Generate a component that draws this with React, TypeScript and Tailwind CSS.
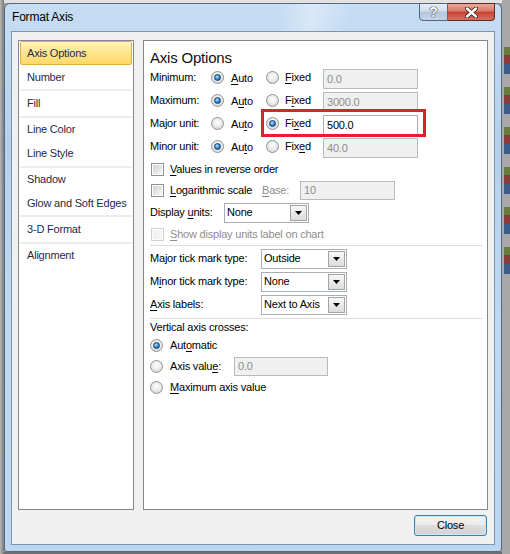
import React from "react";

function Acc({ t, i }: { t: string; i?: number }) {
  if (i === undefined || i < 0) return <>{t}</>;
  return (
    <>
      {t.slice(0, i)}
      <span className="underline decoration-1 underline-offset-[2px]">{t[i]}</span>
      {t.slice(i + 1)}
    </>
  );
}

function Radio({ on }: { on?: boolean }) {
  return (
    <span className="flex h-[13px] w-[13px] shrink-0 items-center justify-center rounded-full border border-[#8f9194] bg-[radial-gradient(circle_at_50%_40%,#ffffff_0%,#ececec_45%,#cdcdcd_100%)]">
      {on && (
        <span className="h-[7px] w-[7px] rounded-full border border-[#0f3f78] bg-[radial-gradient(circle_at_40%_35%,#c4f0ff_0%,#3d92da_45%,#0d4890_100%)]" />
      )}
    </span>
  );
}

function Check({ disabled }: { disabled?: boolean }) {
  return (
    <span
      className={
        disabled
          ? "flex h-[13px] w-[13px] shrink-0 items-center justify-center border border-[#cfd1d4] bg-white"
          : "flex h-[13px] w-[13px] shrink-0 items-center justify-center border border-[#8f9194] bg-white"
      }
    >
      <span
        className={
          disabled
            ? "h-[9px] w-[9px] bg-[#f3f3f3]"
            : "h-[9px] w-[9px] bg-[linear-gradient(135deg,#d2d2d2,#f6f6f6)]"
        }
      />
    </span>
  );
}

function SelectBox({ cls, value }: { cls: string; value: string }) {
  return (
    <div className={cls}>
      <span className="flex-1 overflow-hidden whitespace-nowrap">{value}</span>
      <span className="flex h-[16px] w-[17px] shrink-0 items-center justify-center border border-[#a3a3a3] bg-[linear-gradient(#f7f7f7,#dcdcdc)]">
        <svg width="7" height="4" viewBox="0 0 7 4">
          <path d="M0 0h7L3.5 4z" fill="#000" />
        </svg>
      </span>
    </div>
  );
}

function AxisRow({
  label,
  autoOn,
  autoU,
  fixedU,
  value,
  highlight,
}: {
  label: string;
  autoOn: boolean;
  autoU: number;
  fixedU: number;
  value: string;
  highlight?: boolean;
}) {
  const input = highlight ? (
    <div className="mt-[3px] flex h-[20px] w-[95px] items-center border border-[#abadb3] bg-white pl-[3px] text-black">
      {value}
    </div>
  ) : (
    <div className="mt-[3px] flex h-[20px] w-[95px] items-center border border-[#b7babe] bg-[#f0f0f0] pl-[3px] text-[#8d8d8d]">
      {value}
    </div>
  );
  return (
    <div className="flex h-[23px] items-center">
      <span className="w-[61px] shrink-0">{label}</span>
      <div className="flex w-[55px] shrink-0 items-center gap-[7px]">
        <Radio on={autoOn} />
        <span className="mt-[2px]">
          <Acc t="Auto" i={autoU} />
        </span>
      </div>
      <div className="relative flex h-full items-center">
        <div className="flex w-[57px] shrink-0 items-center gap-[6px]">
          <Radio on={!autoOn} />
          <span>
            <Acc t="Fixed" i={fixedU} />
          </span>
        </div>
        {input}
        {highlight && (
          <div className="pointer-events-none absolute -left-[5px] -top-[3px] h-[28px] w-[165px] border-[3px] border-[#e3202a]" />
        )}
      </div>
    </div>
  );
}

function LeftList() {
  const item = "flex items-center pl-[7px] whitespace-nowrap";
  const sep = "h-[2px] bg-[#ebebf0]";
  return (
    <div className="flex w-[116px] shrink-0 flex-col border border-[#828790] bg-white px-[1px] text-[#1e2b46]">
      <div className="flex h-[24px] items-center rounded-[2px] border border-[#ddb24e] bg-[linear-gradient(#fff4c6,#ffe590_45%,#ffd966)] pl-[6px]">
        Axis Options
      </div>
      <div className={`${item} h-[24px]`}>Number</div>
      <div className={sep} />
      <div className={`${item} h-[25px]`}>Fill</div>
      <div className={sep} />
      <div className={`${item} h-[23px]`}>Line Color</div>
      <div className={`${item} h-[25px]`}>Line Style</div>
      <div className={sep} />
      <div className={`${item} h-[23px]`}>Shadow</div>
      <div className={`${item} h-[24px]`}>Glow and Soft Edges</div>
      <div className={sep} />
      <div className={`${item} h-[25px]`}>3-D Format</div>
      <div className={sep} />
      <div className={`${item} h-[23px]`}>Alignment</div>
    </div>
  );
}

function RightPanel() {
  const sel =
    "flex h-[20px] items-center border border-[#a8aeb6] bg-white pl-[2px] pr-[1px]";
  return (
    <div className="flex w-[345px] shrink-0 flex-col border border-[#828790] bg-white pl-[6px] text-black">
      <div className="h-[25px] pt-[8px] text-[15px] leading-[17px] text-[#111]">Axis Options</div>
      <AxisRow label="Minimum:" autoOn autoU={0} fixedU={0} value="0.0" />
      <AxisRow label="Maximum:" autoOn autoU={1} fixedU={1} value="3000.0" />
      <AxisRow label="Major unit:" autoOn={false} autoU={2} fixedU={2} value="500.0" highlight />
      <AxisRow label="Minor unit:" autoOn autoU={2} fixedU={3} value="40.0" />

      <div className="flex h-[22px] items-center gap-[6px] pl-[1px]">
        <Check />
        <span>
          <Acc t="Values in reverse order" i={0} />
        </span>
      </div>
      <div className="flex h-[21px] items-center pl-[1px]">
        <Check />
        <span className="ml-[6px] w-[92px]">
          <Acc t="Logarithmic scale" i={0} />
        </span>
        <span className="w-[38px] text-[#8d8d8d]">
          <Acc t="Base:" i={0} />
        </span>
        <div className="flex h-[19px] w-[95px] items-center border border-[#b7babe] bg-[#f0f0f0] pl-[3px] text-[#8d8d8d]">
          10
        </div>
      </div>
      <div className="flex h-[23px] items-center">
        <span className="w-[74px] shrink-0">
          <Acc t="Display units:" i={8} />
        </span>
        <SelectBox cls={`${sel} w-[85px]`} value="None" />
      </div>
      <div className="flex h-[21px] items-center gap-[6px] pl-[1px] text-[#8d8d8d]">
        <Check disabled />
        <span>
          <Acc t="Show display units label on chart" i={0} />
        </span>
      </div>
      <div className="mr-[5px] h-[1px] bg-[#dcdcdc]" />
      <div className="mt-[1px] flex h-[23px] items-center">
        <span className="w-[111px] shrink-0">Major tick mark type:</span>
        <SelectBox cls={`${sel} w-[86px]`} value="Outside" />
      </div>
      <div className="flex h-[23px] items-center">
        <span className="w-[111px] shrink-0">
          <Acc t="Minor tick mark type:" i={1} />
        </span>
        <SelectBox cls={`${sel} w-[86px]`} value="None" />
      </div>
      <div className="flex h-[23px] items-center">
        <span className="w-[111px] shrink-0">
          <Acc t="Axis labels:" i={0} />
        </span>
        <SelectBox cls={`${sel} w-[86px]`} value="Next to Axis" />
      </div>
      <div className="mr-[5px] mt-[2px] h-[1px] bg-[#dcdcdc]" />
      <div className="flex h-[17px] items-center">Vertical axis crosses:</div>
      <div className="flex h-[19px] items-center gap-[7px]">
        <Radio on />
        <span>
          <Acc t="Automatic" i={3} />
        </span>
      </div>
      <div className="flex h-[23px] items-center">
        <Radio />
        <span className="ml-[7px] w-[64px]">
          <Acc t="Axis value:" i={9} />
        </span>
        <div className="flex h-[19px] w-[94px] items-center border border-[#b7babe] bg-[#f0f0f0] pl-[3px] text-[#8d8d8d]">
          0.0
        </div>
      </div>
      <div className="flex h-[19px] items-center gap-[7px]">
        <Radio />
        <span>
          <Acc t="Maximum axis value" i={0} />
        </span>
      </div>
    </div>
  );
}

function TitleButtons() {
  return (
    <div className="-mt-[1px] flex h-[18px]">
      <div className="flex h-[18px] w-[29px] items-center justify-center rounded-bl-[4px] border border-[#52657b] bg-[linear-gradient(#e6eef7,#d0deec_45%,#b3c6da_50%,#c4d6e8)]">
        <span className="text-[14px] font-bold leading-none text-white [text-shadow:0_0_1px_#2b3440,0_0_1px_#2b3440,0_0_1px_#2b3440]">
          ?
        </span>
      </div>
      <div className="flex h-[18px] w-[47px] items-center justify-center rounded-br-[4px] border border-l-0 border-[#5e2a24] bg-[linear-gradient(#e9a899,#d9796a_45%,#c54234_50%,#d7705f_100%)]">
        <svg width="13" height="11" viewBox="0 0 13 11">
          <path d="M2 1.5L11 9.5M11 1.5L2 9.5" stroke="#3a2320" strokeWidth="4.2" strokeLinecap="round" />
          <path d="M2 1.5L11 9.5M11 1.5L2 9.5" stroke="#ffffff" strokeWidth="2.4" strokeLinecap="round" />
        </svg>
      </div>
    </div>
  );
}

function Window() {
  return (
    <div className="flex h-[549px] w-[498px] flex-col rounded-t-[6px] rounded-b-[3px] border border-[#556a82] bg-[linear-gradient(180deg,#c6ddf4_0%,#b6d0ec_25%,#c0d9f2_60%,#bcd5f0_100%)] px-[6px] pb-[6px]">
      <div className="flex h-[27px] items-start justify-between bg-[linear-gradient(100deg,rgba(255,255,255,0)_0%,rgba(255,255,255,0)_55%,rgba(255,255,255,0.35)_62%,rgba(255,255,255,0)_70%,rgba(255,255,255,0)_100%)]">
        <span className="pl-[1px] pt-[6px] text-[12px] leading-[14px] text-black">Format Axis</span>
        <TitleButtons />
      </div>
      <div className="flex h-[514px] flex-col border border-[#7f93a9] bg-[#f0f0f0]">
        <div className="mt-[8px] flex h-[470px] gap-[9px] px-[6px]">
          <LeftList />
          <RightPanel />
        </div>
        <div className="flex justify-end pr-[7px] pt-[5px]">
          <div className="flex h-[21px] w-[73px] items-center justify-center rounded-[3px] border border-[#3c7fb1] bg-[linear-gradient(#f3f3f3,#ebebeb_45%,#dddddd_50%,#d3d3d3)] shadow-[inset_0_0_0_1px_#c4ecfb] text-black">
            Close
          </div>
        </div>
      </div>
    </div>
  );
}

function RightStrip() {
  const groups = [0, 1, 2, 3, 4, 5];
  return (
    <div className="flex h-full w-[8px] shrink-0 flex-col bg-[#a8a8a8] pl-[2px] pt-[47px]">
      {groups.map((g) => (
        <div key={g} className="mb-[13px] flex flex-col">
          <div className="h-[8px] bg-[#657d3c]" />
          <div className="h-[9px] bg-[#8b3a3a]" />
          <div className="h-[10px] bg-[#3a5d8c]" />
        </div>
      ))}
    </div>
  );
}

export default function App() {
  return (
    <div className="flex h-[554px] w-[510px] overflow-hidden bg-[#9a9a9a] font-['Liberation_Sans',Arial,sans-serif] text-[11px] tracking-[-0.2px] text-black">
      <div className="h-full w-[4px] shrink-0 bg-[linear-gradient(90deg,#b8b8b8,#7a7a7a)]" />
      <div className="flex w-[498px] shrink-0 flex-col">
        <div className="h-[3px] bg-[#e2e2e2]" />
        <Window />
        <div className="flex-1 bg-[#6f6f6f]" />
      </div>
      <RightStrip />
    </div>
  );
}
